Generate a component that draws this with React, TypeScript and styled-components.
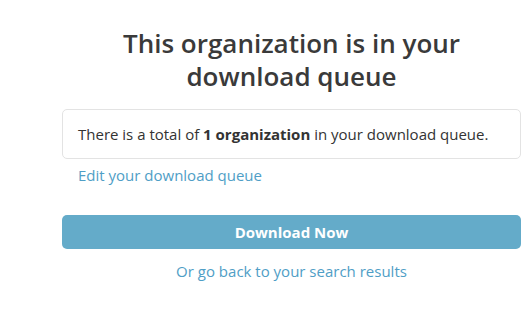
import { FC } from 'react'
import styled, { createGlobalStyle } from 'styled-components'

const GlobalStyle = createGlobalStyle`
	html, body {
		margin: 0;
		padding: 0;
		background: #ffffff;
	}
	body {
		font-family: 'Open Sans', 'Liberation Sans', sans-serif;
		color: #333333;
	}
`

const Page = styled.div`
	width: 531px;
	height: 309px;
	box-sizing: border-box;
	padding: 27px 10px 0 62px;
`

const Column = styled.div`
	display: flex;
	flex-direction: column;
	width: 459px;
`

const Title = styled.h1`
	margin: 0 0 16px;
	font-size: 26px;
	line-height: 33px;
	font-weight: 600;
	text-align: center;
	color: #3a3a3a;
`

const Card = styled.div`
	box-sizing: border-box;
	height: 50px;
	border: 1px solid #e3e3e3;
	border-radius: 5px;
	padding: 14px 15px;
	font-size: 15px;
	line-height: 20px;
	color: #333333;

	strong {
		font-weight: 700;
	}
`

const Link = styled.a<{ centered?: boolean }>`
	display: block;
	font-size: 15px;
	line-height: 20px;
	color: #4f9ec6;
	text-decoration: none;
	cursor: pointer;
	text-align: ${({ centered }) => (centered ? 'center' : 'left')};
	padding-left: ${({ centered }) => (centered ? '0' : '16px')};
`

const EditLink = styled(Link)`
	margin-top: 6px;
`

const DownloadButton = styled.button`
	margin-top: 30px;
	height: 34px;
	border: none;
	border-radius: 5px;
	background-color: #64abc9;
	color: #ffffff;
	font-family: 'Open Sans', 'Liberation Sans', sans-serif;
	font-size: 15px;
	font-weight: 700;
	cursor: pointer;
`

const BackLink = styled(Link)`
	margin-top: 12px;
`

const App: FC = () => {
	return (
		<>
			<GlobalStyle />
			<Page>
				<Column>
					<Title>
						This organization is in your
						<br />
						download queue
					</Title>
					<Card>
						There is a total of <strong>1 organization</strong> in your download queue.
					</Card>
					<EditLink>Edit your download queue</EditLink>
					<DownloadButton>Download Now</DownloadButton>
					<BackLink centered>Or go back to your search results</BackLink>
				</Column>
			</Page>
		</>
	)
}

export default App
